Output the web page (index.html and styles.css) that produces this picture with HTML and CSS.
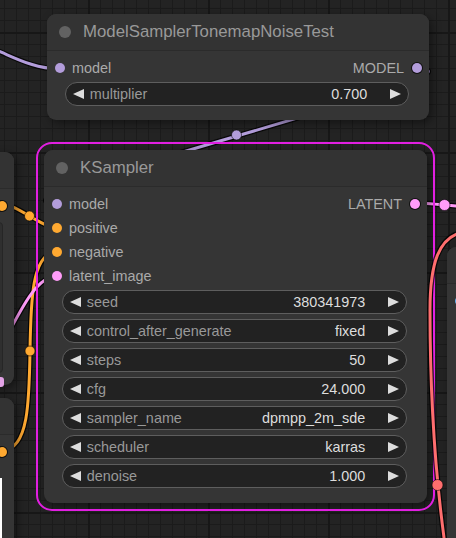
FILE: index.html
```html
<!DOCTYPE html>
<html>
<head>
<meta charset="utf-8">
<link rel="stylesheet" href="styles.css">
</head>
<body>
<div class="canvas">
  <svg class="links" width="456" height="538" viewBox="0 0 456 538">
    <g class="shadow">
      <path d="M -40 40 C 0 45, 20 68, 59 69"/>
      <path d="M 417 69 C 513 69, -39 203, 57 203"/>
      <path d="M 2 204 C 17 204, 42 228, 57 228"/>
      <path d="M 3 450 C 54 450, 6 252, 57 252"/>
      <path d="M -40 390 C -2.6 390, 19.6 276, 57 276"/>
      <path d="M 415 203 C 430 203, 460 207, 475 207"/>
    </g>
    <path class="wire model" d="M -40 40 C 0 45, 20 68, 59 69"/>
    <path class="wire model" d="M 417 69 C 513 69, -39 203, 57 203"/>
    <path class="wire cond" d="M 2 204 C 17 204, 42 228, 57 228"/>
    <path class="wire cond" d="M 3 450 C 54 450, 6 252, 57 252"/>
    <path class="wire latent" d="M -40 390 C -2.6 390, 19.6 276, 57 276"/>
    <path class="wire latent" d="M 415 203 C 430 203, 460 207, 475 207"/>
    <circle class="mark model" cx="236.5" cy="135" r="5"/>
    <circle class="mark cond" cx="29.5" cy="216" r="5"/>
    <circle class="mark cond" cx="30" cy="351" r="5"/>
    <circle class="mark latent" cx="444.5" cy="205" r="5.5"/>
  </svg>

  <div class="node node-a">
    <div class="title"></div>
    <div class="body">
      <div class="slot-row end">
        <div class="slot out"><span class="dot cond"></span></div>
      </div>
      <div class="textarea"></div>
      <div class="stub latent"></div>
    </div>
  </div>

  <div class="node node-b">
    <div class="title"></div>
    <div class="body">
      <div class="slot-row end">
        <div class="slot out"><span class="dot cond"></span></div>
      </div>
      <div class="preview"></div>
    </div>
  </div>

  <div class="node node-c">
    <div class="title"></div>
    <div class="body">
      <div class="slot-row">
        <div class="slot in"><span class="dot image"></span></div>
      </div>
    </div>
  </div>

  <div class="node node-top">
    <div class="title"><span class="title-dot"></span><span class="title-text">ModelSamplerTonemapNoiseTest</span></div>
    <div class="body short">
      <div class="slot-row">
        <div class="slot in"><span class="dot model"></span><span class="label">model</span></div>
        <div class="slot out"><span class="label">MODEL</span><span class="dot model"></span></div>
      </div>
      <div class="widgets">
        <div class="widget"><span class="arrow-l"></span><span class="wlabel">multiplier</span><span class="wvalue">0.700</span><span class="arrow-r"></span></div>
      </div>
    </div>
  </div>

  <div class="node node-ks selected">
    <div class="title"><span class="title-dot"></span><span class="title-text">KSampler</span></div>
    <div class="body">
      <div class="slot-row">
        <div class="slot in"><span class="dot model"></span><span class="label">model</span></div>
        <div class="slot out"><span class="label">LATENT</span><span class="dot latent"></span></div>
      </div>
      <div class="slot-row">
        <div class="slot in"><span class="dot cond"></span><span class="label">positive</span></div>
      </div>
      <div class="slot-row">
        <div class="slot in"><span class="dot cond"></span><span class="label">negative</span></div>
      </div>
      <div class="slot-row">
        <div class="slot in"><span class="dot latent"></span><span class="label">latent_image</span></div>
      </div>
      <div class="widgets">
        <div class="widget"><span class="arrow-l"></span><span class="wlabel">seed</span><span class="wvalue">380341973</span><span class="arrow-r"></span></div>
        <div class="widget"><span class="arrow-l"></span><span class="wlabel">control_after_generate</span><span class="wvalue">fixed</span><span class="arrow-r"></span></div>
        <div class="widget"><span class="arrow-l"></span><span class="wlabel">steps</span><span class="wvalue">50</span><span class="arrow-r"></span></div>
        <div class="widget"><span class="arrow-l"></span><span class="wlabel">cfg</span><span class="wvalue">24.000</span><span class="arrow-r"></span></div>
        <div class="widget"><span class="arrow-l"></span><span class="wlabel">sampler_name</span><span class="wvalue">dpmpp_2m_sde</span><span class="arrow-r"></span></div>
        <div class="widget"><span class="arrow-l"></span><span class="wlabel">scheduler</span><span class="wvalue">karras</span><span class="arrow-r"></span></div>
        <div class="widget"><span class="arrow-l"></span><span class="wlabel">denoise</span><span class="wvalue">1.000</span><span class="arrow-r"></span></div>
      </div>
    </div>
  </div>

  <svg class="links front" width="456" height="538" viewBox="0 0 456 538">
    <path class="shadow-line" d="M 464 232 C 438 236 430 265 430 310 C 430 400 436 480 445 545"/>
    <path class="wire vae" d="M 464 232 C 438 236 430 265 430 310 C 430 400 436 480 445 545"/>
    <circle class="mark vae" cx="437.5" cy="485" r="5.5"/>
  </svg>
</div>
</body>
</html>
```

FILE: styles.css
```css
html, body {
  margin: 0;
  padding: 0;
  background: #222;
}

.canvas {
  position: relative;
  width: 456px;
  height: 538px;
  overflow: hidden;
  font-family: "Liberation Sans", Arial, sans-serif;
  background-color: #232323;
  background-image:
    linear-gradient(to right, #171717 0 2px, transparent 2px),
    linear-gradient(to bottom, #171717 0 2px, transparent 2px),
    linear-gradient(to right, #1b1b1b 0 1px, transparent 1px),
    linear-gradient(to bottom, #1b1b1b 0 1px, transparent 1px);
  background-size: 120px 120px, 120px 120px, 12px 12px, 12px 12px;
  background-position: 88px 0, 0 32px, 4px 0, 0 8px;
}

/* links */
.links {
  position: absolute;
  left: 0;
  top: 0;
  overflow: visible;
}
.links.front {
  z-index: 5;
}
.shadow path,
.shadow-line {
  fill: none;
  stroke: #000;
  stroke-width: 5.5;
  stroke-opacity: 0.75;
}
.wire {
  fill: none;
  stroke-width: 3;
}
.wire.model { stroke: #b39ddb; }
.wire.cond { stroke: #ffa931; }
.wire.latent { stroke: #ff9cf9; }
.wire.vae { stroke: #ff6e6e; }

.mark {
  stroke: rgba(0, 0, 0, 0.55);
  stroke-width: 1;
}
.mark.model { fill: #b39ddb; }
.mark.cond { fill: #ffa931; }
.mark.latent { fill: #ff9cf9; }
.mark.vae { fill: #ff6e6e; }

/* nodes */
.node {
  position: absolute;
  background: #353535;
  border-radius: 9px;
  box-shadow: 3px 3px 10px rgba(0, 0, 0, 0.45);
  display: flex;
  flex-direction: column;
}

.title {
  height: 36px;
  flex: none;
  display: flex;
  align-items: center;
  background: #333;
  border-radius: 9px 9px 0 0;
  border-bottom: 1px solid #2b2b2b;
}
.title-dot {
  width: 12px;
  height: 12px;
  border-radius: 50%;
  background: #626262;
  margin-left: 12px;
  flex: none;
}
.title-text {
  margin-left: 12px;
  color: #999;
  font-size: 16.8px;
  white-space: nowrap;
}

.body {
  padding: 5px 0 15px 0;
  display: flex;
  flex-direction: column;
}
.body.short {
  padding-bottom: 14px;
}

.slot-row {
  height: 24px;
  display: flex;
  align-items: center;
  justify-content: space-between;
}
.slot-row.end {
  justify-content: flex-end;
}
.slot {
  display: flex;
  align-items: center;
  gap: 7.5px;
  font-size: 14.4px;
  color: #aaa;
  white-space: nowrap;
}
.slot.in { padding-left: 7.5px; }
.slot.out { padding-right: 7.5px; }

.dot {
  width: 10px;
  height: 10px;
  border-radius: 50%;
  flex: none;
}
.slot.out .dot {
  box-shadow: 0 0 0 1px #111;
}
.dot.model { background: #b39ddb; }
.dot.cond { background: #ffa931; }
.dot.latent { background: #ff9cf9; }
.dot.image { background: #64b5f6; }

/* widgets */
.widgets {
  margin: 2px 20px 0 18px;
  display: flex;
  flex-direction: column;
  gap: 5px;
}
.widget {
  height: 24px;
  box-sizing: border-box;
  border: 1px solid #5e5e5e;
  border-radius: 12px;
  background: #222;
  display: flex;
  align-items: center;
  padding: 0 6.7px;
  font-size: 14.4px;
  white-space: nowrap;
}
.arrow-l {
  width: 0;
  height: 0;
  border-top: 5.5px solid transparent;
  border-bottom: 5.5px solid transparent;
  border-right: 11.5px solid #ddd;
  flex: none;
}
.arrow-r {
  width: 0;
  height: 0;
  border-top: 5.5px solid transparent;
  border-bottom: 5.5px solid transparent;
  border-left: 11.5px solid #ddd;
  flex: none;
}
.wlabel {
  flex: 1;
  margin-left: 6px;
  color: #999;
}
.wvalue {
  color: #ddd;
  margin-right: 23px;
}

/* selection outline */
.node.selected::after {
  content: "";
  position: absolute;
  inset: -8px;
  border: 2px solid #e11fe1;
  border-radius: 16px;
  pointer-events: none;
}

/* placement on the graph canvas */
.node-top {
  left: 47px;
  top: 14px;
  width: 382px;
}
.node-ks {
  left: 44px;
  top: 150px;
  width: 383px;
}
.node-a {
  left: -86px;
  top: 152px;
  width: 100px;
  height: 233px;
}
.node-b {
  left: -86px;
  top: 398px;
  width: 100px;
  height: 200px;
}
.node-c {
  left: 447px;
  top: 247px;
  width: 100px;
  height: 360px;
}

.textarea {
  margin: 4px 11px 0 0;
  height: 151px;
  box-sizing: border-box;
  background: #2f2f2f;
  border: 1px solid #262626;
  border-radius: 4px;
}
.stub {
  margin: 4px 10.5px 0 0;
  height: 10px;
  background: #e3a2e6;
  border-radius: 0 3px 3px 0;
}
.preview {
  margin: 14px 12.5px 0 0;
  height: 80px;
  background: #fff;
}
```
